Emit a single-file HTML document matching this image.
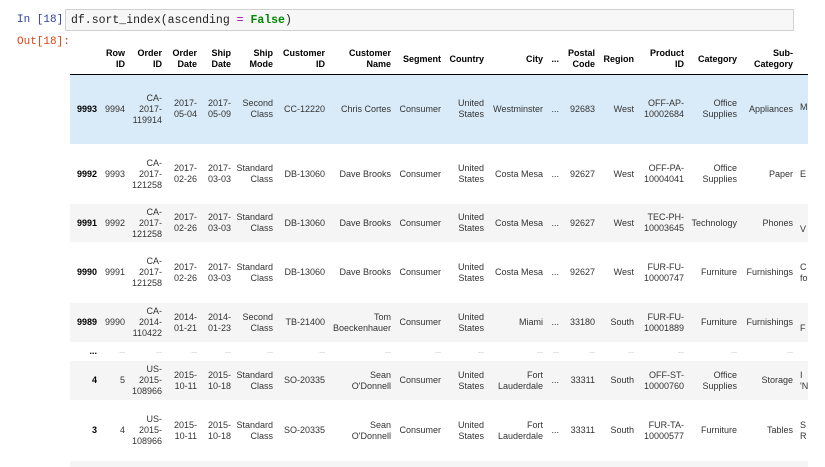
<!DOCTYPE html>
<html><head><meta charset="utf-8"><style>
body{margin:0;width:825px;height:467px;overflow:hidden;background:#fff;font-family:"Liberation Sans",Arial,sans-serif;color:#333;position:relative}
.pr{position:absolute;left:17px;font-family:"Liberation Mono",monospace;font-size:11px}
.code{position:absolute;left:65px;top:9px;width:729px;height:22px;background:#f7f7f7;border:1px solid #d0d0d0;font-family:"Liberation Mono",monospace;font-size:11.5px;line-height:22px;padding-left:5px;box-sizing:border-box;color:#222}
.wrap{position:absolute;left:70px;top:45px;width:738px;height:422px;overflow:hidden}
table{border-collapse:collapse;table-layout:fixed;width:806px;font-size:9px;line-height:11px}
td,th{padding:0 3px 0 0;text-align:right;vertical-align:middle;overflow:hidden;white-space:normal}
th{font-weight:bold;color:#000}
thead tr{height:29px;border-bottom:1px solid #000}
tbody th{color:#000}
.b{background:#d9ebf8}.g{background:#f5f5f5}
.e td,.e th{color:#999;font-size:7px}
.l{text-align:left;padding-left:4px}
</style></head><body>
<div class="pr" style="top:14px;color:#303f9f">In [18]:</div>
<div class="code">df.sort_index(ascending <span style="color:#a0a;">=</span> <b style="color:#080">False</b>)</div>
<div class="pr" style="top:36px;color:#d84315">Out[18]:</div>
<div class="wrap"><table>
<colgroup><col style="width:30px"><col style="width:28px"><col style="width:37px"><col style="width:35px"><col style="width:34px"><col style="width:42px"><col style="width:52px"><col style="width:66px"><col style="width:50px"><col style="width:43px"><col style="width:59px"><col style="width:16px"><col style="width:36px"><col style="width:39px"><col style="width:50px"><col style="width:53px"><col style="width:56px"><col style="width:80px"></colgroup>
<thead><tr><th></th><th>Row ID</th><th>Order ID</th><th>Order Date</th><th>Ship Date</th><th>Ship Mode</th><th>Customer ID</th><th>Customer Name</th><th>Segment</th><th>Country</th><th>City</th><th>...</th><th>Postal Code</th><th>Region</th><th>Product<br>ID</th><th>Category</th><th>Sub-Category</th><th></th></tr></thead>
<tbody>
<tr class="b" style="height:70px"><th>9993</th><td>9994</td><td>CA-2017-119914</td><td>2017-05-04</td><td>2017-05-09</td><td>Second Class</td><td>CC-12220</td><td>Chris Cortes</td><td>Consumer</td><td>United States</td><td>Westminster</td><td>...</td><td>92683</td><td>West</td><td>OFF-AP-10002684</td><td>Office Supplies</td><td>Appliances</td><td class="l" style="vertical-align:top;padding-top:27px">M</td></tr>
<tr style="height:60px"><th>9992</th><td>9993</td><td>CA-2017-121258</td><td>2017-02-26</td><td>2017-03-03</td><td>Standard Class</td><td>DB-13060</td><td>Dave Brooks</td><td>Consumer</td><td>United States</td><td>Costa Mesa</td><td>...</td><td>92627</td><td>West</td><td>OFF-PA-10004041</td><td>Office Supplies</td><td>Paper</td><td class="l">E</td></tr>
<tr class="g" style="height:38px"><th>9991</th><td>9992</td><td>CA-2017-121258</td><td>2017-02-26</td><td>2017-03-03</td><td>Standard Class</td><td>DB-13060</td><td>Dave Brooks</td><td>Consumer</td><td>United States</td><td>Costa Mesa</td><td>...</td><td>92627</td><td>West</td><td>TEC-PH-10003645</td><td>Technology</td><td>Phones</td><td class="l" style="padding-top:12px">V</td></tr>
<tr style="height:61px"><th>9990</th><td>9991</td><td>CA-2017-121258</td><td>2017-02-26</td><td>2017-03-03</td><td>Standard Class</td><td>DB-13060</td><td>Dave Brooks</td><td>Consumer</td><td>United States</td><td>Costa Mesa</td><td>...</td><td>92627</td><td>West</td><td>FUR-FU-10000747</td><td>Furniture</td><td>Furnishings</td><td class="l">C<br>fo</td></tr>
<tr class="g" style="height:39px"><th>9989</th><td>9990</td><td>CA-2014-110422</td><td>2014-01-21</td><td>2014-01-23</td><td>Second Class</td><td>TB-21400</td><td>Tom Boeckenhauer</td><td>Consumer</td><td>United States</td><td>Miami</td><td>...</td><td>33180</td><td>South</td><td>FUR-FU-10001889</td><td>Furniture</td><td>Furnishings</td><td class="l" style="padding-top:12px">F</td></tr>
<tr class="e" style="height:19px"><th style="color:#000;font-size:9px">...</th><td>...</td><td>...</td><td>...</td><td>...</td><td>...</td><td>...</td><td>...</td><td>...</td><td>...</td><td>...</td><td>...</td><td>...</td><td>...</td><td>...</td><td>...</td><td>...</td><td></td></tr>
<tr class="g" style="height:39px"><th>4</th><td>5</td><td>US-2015-108966</td><td>2015-10-11</td><td>2015-10-18</td><td>Standard Class</td><td>SO-20335</td><td>Sean<br>O'Donnell</td><td>Consumer</td><td>United States</td><td>Fort Lauderdale</td><td>...</td><td>33311</td><td>South</td><td>OFF-ST-10000760</td><td>Office Supplies</td><td>Storage</td><td class="l">I<br>'N</td></tr>
<tr style="height:61px"><th>3</th><td>4</td><td>US-2015-108966</td><td>2015-10-11</td><td>2015-10-18</td><td>Standard Class</td><td>SO-20335</td><td>Sean<br>O'Donnell</td><td>Consumer</td><td>United States</td><td>Fort Lauderdale</td><td>...</td><td>33311</td><td>South</td><td>FUR-TA-10000577</td><td>Furniture</td><td>Tables</td><td class="l">S<br>R</td></tr>
<tr class="g" style="height:40px"><th></th><td></td><td></td><td></td><td></td><td></td><td></td><td></td><td></td><td></td><td></td><td></td><td></td><td></td><td></td><td></td><td></td><td></td></tr>
</tbody></table></div>
</body></html>
